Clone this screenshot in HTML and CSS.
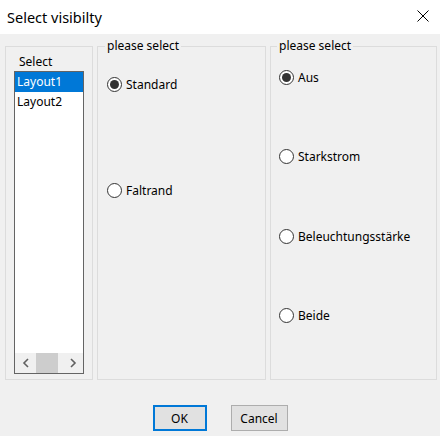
FILE: index.html
```html
<!DOCTYPE html>
<html lang="de">
<head>
<meta charset="utf-8">
<title>Select visibilty</title>
<link rel="stylesheet" href="styles.css">
</head>
<body>
<div class="dialog">
  <div class="titlebar">
    <span class="title">Select visibilty</span>
    <span class="close" aria-label="Close">
      <svg width="12" height="12" viewBox="0 0 12 12"><path d="M0.5 0.5 L11.5 11.5 M11.5 0.5 L0.5 11.5" stroke="#000" stroke-width="1" fill="none"/></svg>
    </span>
  </div>
  <div class="content">
    <div class="groups">
      <fieldset class="group group-list">
        <div class="list-label">Select</div>
        <div class="listbox">
          <div class="item selected">Layout1</div>
          <div class="item">Layout2</div>
          <div class="list-spacer"></div>
          <div class="hscroll">
            <span class="sb-btn">
              <svg width="8" height="10" viewBox="0 0 8 10"><path d="M6 1 L2 5 L6 9" stroke="#606060" stroke-width="1.6" fill="none"/></svg>
            </span>
            <span class="sb-thumb"></span>
            <span class="sb-track"></span>
            <span class="sb-btn">
              <svg width="8" height="10" viewBox="0 0 8 10"><path d="M2 1 L6 5 L2 9" stroke="#606060" stroke-width="1.6" fill="none"/></svg>
            </span>
          </div>
        </div>
      </fieldset>
      <fieldset class="group group-mid">
        <legend class="legend">please select</legend>
        <div class="radios radios-mid">
          <label class="radio checked"><span class="circle"></span><span>Standard</span></label>
          <label class="radio"><span class="circle"></span><span>Faltrand</span></label>
        </div>
      </fieldset>
      <fieldset class="group group-right">
        <legend class="legend">please select</legend>
        <div class="radios radios-right">
          <label class="radio checked"><span class="circle"></span><span>Aus</span></label>
          <label class="radio"><span class="circle"></span><span>Starkstrom</span></label>
          <label class="radio"><span class="circle"></span><span>Beleuchtungsstärke</span></label>
          <label class="radio"><span class="circle"></span><span>Beide</span></label>
        </div>
      </fieldset>
    </div>
    <div class="buttons">
      <span class="btn btn-default">OK</span>
      <span class="btn btn-cancel">Cancel</span>
    </div>
  </div>
</div>
</body>
</html>
```
FILE: styles.css
```css
* { box-sizing: border-box; }
html, body {
  margin: 0;
  padding: 0;
}
body {
  width: 440px;
  height: 436px;
  overflow: hidden;
  font-family: "Noto Sans", "Open Sans", sans-serif;
  font-size: 12px;
  color: #000;
  background: #f0f0f0;
}
.dialog {
  width: 440px;
  height: 436px;
  display: flex;
  flex-direction: column;
}
.titlebar {
  height: 34px;
  background: #fff;
  display: flex;
  align-items: center;
  justify-content: space-between;
  padding: 0 11px 0 7px;
}
.title {
  font-size: 14.5px;
  line-height: 20px;
}
.close {
  display: flex;
  width: 12px;
  height: 12px;
  margin-top: -2px;
}
.content {
  flex: 1;
  display: flex;
  flex-direction: column;
  padding: 5px 3px 5px 5px;
  background: #f0f0f0;
}
.groups {
  flex: 1;
  display: flex;
  gap: 4px;
}
.group {
  margin: 0;
  padding: 0;
  min-width: 0;
  border: 1px solid #dcdcdc;
}
.group-list {
  width: 88px;
  margin-top: 7px;
  display: flex;
  flex-direction: column;
}
.group-mid { width: 169px; }
.group-right { width: 167px; }
.legend {
  padding: 0 2px;
  line-height: 14px;
  font-size: 12px;
}
.group-mid .legend { margin-left: 7px; }
.group-right .legend { margin-left: 6px; }

.list-label {
  margin: 8px 0 0 13px;
  line-height: 14px;
}
.listbox {
  flex: 1;
  margin: 2px 0 5px 8px;
  width: 70px;
  border: 1px solid #646464;
  background: #fff;
  display: flex;
  flex-direction: column;
}
.item {
  height: 20px;
  line-height: 20px;
  padding-left: 2px;
  white-space: nowrap;
}
.item.selected {
  background: #0078d7;
  color: #fff;
}
.list-spacer { flex: 1; }
.hscroll {
  height: 20px;
  background: #f0f0f0;
  display: flex;
}
.sb-btn {
  width: 21px;
  display: flex;
  align-items: center;
  justify-content: center;
}
.sb-thumb {
  width: 22px;
  background: #cdcdcd;
}
.sb-track { flex: 1; }

.radios {
  display: flex;
  flex-direction: column;
}
.radios-mid {
  padding-left: 9px;
  padding-top: 23px;
  gap: 90px;
}
.radios-right {
  padding-left: 8px;
  padding-top: 16px;
  gap: 63.5px;
}
.radio {
  height: 16px;
  display: flex;
  align-items: center;
  gap: 4px;
  white-space: nowrap;
}
.circle {
  width: 15px;
  height: 15px;
  border: 1.5px solid #333;
  border-radius: 50%;
  background: #fff;
  display: flex;
  align-items: center;
  justify-content: center;
  flex: none;
}
.radio.checked .circle::after {
  content: "";
  width: 9px;
  height: 9px;
  border-radius: 50%;
  background: #333;
}

.buttons {
  margin-top: 25px;
  height: 26px;
  display: flex;
  justify-content: center;
  gap: 24px;
  padding-right: 2px;
}
.btn {
  height: 26px;
  background: #e1e1e1;
  display: flex;
  align-items: center;
  justify-content: center;
}
.btn-default {
  width: 54px;
  border: 2px solid #0078d7;
}
.btn-cancel {
  width: 57px;
  border: 1px solid #adadad;
}
```
